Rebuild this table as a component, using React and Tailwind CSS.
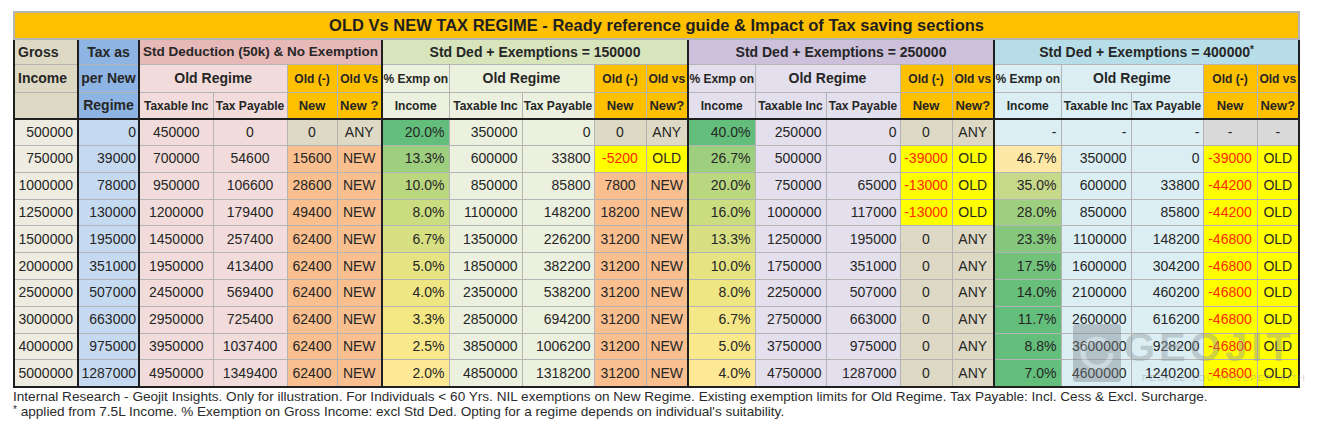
import React from "react";

const widths = [64, 61, 74, 74, 50, 45, 67, 73, 72, 52, 42, 67, 71, 74, 52, 42, 67, 70, 72, 54, 42];

const DARK_L = "border-l-2 border-l-[#1f1f1f]";
const DARK_B = "border-b-2 border-b-[#1f1f1f]";

// gross, taxNew, s1 [taxable, taxpay, diff, verdict], s2..s4 [pct, taxable, taxpay, diff, verdict]
const rows = [
  ["500000", "0", ["450000", "0", "0", "ANY"], ["20.0%", "350000", "0", "0", "ANY"], ["40.0%", "250000", "0", "0", "ANY"], ["-", "-", "-", "-", "-"]],
  ["750000", "39000", ["700000", "54600", "15600", "NEW"], ["13.3%", "600000", "33800", "-5200", "OLD"], ["26.7%", "500000", "0", "-39000", "OLD"], ["46.7%", "350000", "0", "-39000", "OLD"]],
  ["1000000", "78000", ["950000", "106600", "28600", "NEW"], ["10.0%", "850000", "85800", "7800", "NEW"], ["20.0%", "750000", "65000", "-13000", "OLD"], ["35.0%", "600000", "33800", "-44200", "OLD"]],
  ["1250000", "130000", ["1200000", "179400", "49400", "NEW"], ["8.0%", "1100000", "148200", "18200", "NEW"], ["16.0%", "1000000", "117000", "-13000", "OLD"], ["28.0%", "850000", "85800", "-44200", "OLD"]],
  ["1500000", "195000", ["1450000", "257400", "62400", "NEW"], ["6.7%", "1350000", "226200", "31200", "NEW"], ["13.3%", "1250000", "195000", "0", "ANY"], ["23.3%", "1100000", "148200", "-46800", "OLD"]],
  ["2000000", "351000", ["1950000", "413400", "62400", "NEW"], ["5.0%", "1850000", "382200", "31200", "NEW"], ["10.0%", "1750000", "351000", "0", "ANY"], ["17.5%", "1600000", "304200", "-46800", "OLD"]],
  ["2500000", "507000", ["2450000", "569400", "62400", "NEW"], ["4.0%", "2350000", "538200", "31200", "NEW"], ["8.0%", "2250000", "507000", "0", "ANY"], ["14.0%", "2100000", "460200", "-46800", "OLD"]],
  ["3000000", "663000", ["2950000", "725400", "62400", "NEW"], ["3.3%", "2850000", "694200", "31200", "NEW"], ["6.7%", "2750000", "663000", "0", "ANY"], ["11.7%", "2600000", "616200", "-46800", "OLD"]],
  ["4000000", "975000", ["3950000", "1037400", "62400", "NEW"], ["2.5%", "3850000", "1006200", "31200", "NEW"], ["5.0%", "3750000", "975000", "0", "ANY"], ["8.8%", "3600000", "928200", "-46800", "OLD"]],
  ["5000000", "1287000", ["4950000", "1349400", "62400", "NEW"], ["2.0%", "4850000", "1318200", "31200", "NEW"], ["4.0%", "4750000", "1287000", "0", "ANY"], ["7.0%", "4600000", "1240200", "-46800", "OLD"]],
];

// colour scale for the "% Exmp" columns
const scale = {
  s2: ["bg-[#63be7b]", "bg-[#9dcf7e]", "bg-[#bad780]", "bg-[#cbdc81]", "bg-[#d6df82]", "bg-[#e5e382]", "bg-[#eee683]", "bg-[#f4e883]", "bg-[#fae98c]", "bg-[#fde995]"],
  s3: ["bg-[#63be7b]", "bg-[#9dcf7e]", "bg-[#bad780]", "bg-[#cbdc81]", "bg-[#d7df82]", "bg-[#e5e382]", "bg-[#eee683]", "bg-[#f3e787]", "bg-[#fae98c]", "bg-[#fde995]"],
  s4: ["bg-[#daeef3]", "bg-[#fde8a6]", "bg-[#c6d98a]", "bg-[#9ecf80]", "bg-[#84c77d]", "bg-[#72c27c]", "bg-[#68bf7b]", "bg-[#63be7b]", "bg-[#63be7b]", "bg-[#63be7b]"],
};

const verdictBg = {
  ANY: "bg-[#ddd9c4]",
  NEW: "bg-[#fabf8f]",
  OLD: "bg-[#ffff00]",
  "-": "bg-[#d9d9d9]",
};

const Cell = ({ className = "", children, ...rest }) => (
  <td
    {...rest}
    className={`border border-[#b4b4b4] p-0 whitespace-nowrap overflow-hidden ${className}`}
  >
    {children}
  </td>
);

const DiffCells = ({ diff, verdict }) => (
  <>
    <Cell className={`text-center ${verdictBg[verdict]} ${diff.startsWith("-") && diff !== "-" ? "text-[#ff2a00]" : ""}`}>
      {diff}
    </Cell>
    <Cell className={`text-center ${verdictBg[verdict]}`}>{verdict}</Cell>
  </>
);

const Section = ({ vals, i, pctScale, bg }) => (
  <>
    <Cell className={`text-right pr-[4px] ${DARK_L} ${pctScale[i]}`}>{vals[0]}</Cell>
    <Cell className={`text-right pr-[4px] ${bg}`}>{vals[1]}</Cell>
    <Cell className={`text-right pr-[3px] ${bg}`}>{vals[2]}</Cell>
    <DiffCells diff={vals[3]} verdict={vals[4]} />
  </>
);

const hSmall = "text-[12px] font-bold text-center";
const hOrange = "bg-[#ffc000] text-[12px] font-bold text-center";

export default function App() {
  return (
    <div className="relative w-[1320px] h-[424px] bg-white text-[#262626] font-['Liberation_Sans',Arial,sans-serif]">
      <div className="pt-[11px] pl-[13px]">
        <table className="table-fixed border-collapse border-2 border-[#1f1f1f] w-[1287px]">
          <colgroup>
            {widths.map((w, i) => (
              <col key={i} style={{ width: w }} />
            ))}
          </colgroup>
          <thead>
            <tr className="h-[26px]">
              <Cell colSpan={21} className="bg-[#ffc000] border-2 border-[#1f1f1f] text-center text-[16.5px] font-bold text-[#1f1f1f]">
                OLD Vs NEW TAX REGIME - Ready reference guide &amp; Impact of Tax saving sections
              </Cell>
            </tr>
            <tr className="h-[26px] text-[14px] font-bold">
              <Cell className="bg-[#ddd9c4] text-left pl-[3px]">Gross</Cell>
              <Cell className={`bg-[#8db4e2] text-center ${DARK_L}`}>Tax as</Cell>
              <Cell colSpan={4} className={`bg-[#e6b8b7] text-center text-[13.5px] ${DARK_L}`}>
                Std Deduction (50k) &amp; No Exemption
              </Cell>
              <Cell colSpan={5} className={`bg-[#d8e4bc] text-center ${DARK_L}`}>
                Std Ded + Exemptions = 150000
              </Cell>
              <Cell colSpan={5} className={`bg-[#ccc0da] text-center ${DARK_L}`}>
                Std Ded + Exemptions = 250000
              </Cell>
              <Cell colSpan={5} className={`bg-[#b7dee8] text-center ${DARK_L}`}>
                Std Ded + Exemptions = 400000<span className="relative -top-[4px] text-[10px]">*</span>
              </Cell>
            </tr>
            <tr className="h-[28px]">
              <Cell className="bg-[#ddd9c4] text-left pl-[3px] text-[14px] font-bold">Income</Cell>
              <Cell className={`bg-[#8db4e2] text-center text-[14px] font-bold ${DARK_L}`}>per New</Cell>
              <Cell colSpan={2} className={`bg-[#f2dcdb] text-center text-[14px] font-bold ${DARK_L}`}>Old Regime</Cell>
              <Cell className={hOrange}>Old (-)</Cell>
              <Cell className={hOrange}>Old Vs</Cell>
              <Cell className={`bg-[#ebf1de] ${hSmall} ${DARK_L}`}>% Exmp on</Cell>
              <Cell colSpan={2} className="bg-[#ebf1de] text-center text-[14px] font-bold">Old Regime</Cell>
              <Cell className={hOrange}>Old (-)</Cell>
              <Cell className={hOrange}>Old vs</Cell>
              <Cell className={`bg-[#e4dfec] ${hSmall} ${DARK_L}`}>% Exmp on</Cell>
              <Cell colSpan={2} className="bg-[#e4dfec] text-center text-[14px] font-bold">Old Regime</Cell>
              <Cell className={hOrange}>Old (-)</Cell>
              <Cell className={hOrange}>Old vs</Cell>
              <Cell className={`bg-[#daeef3] ${hSmall} ${DARK_L}`}>% Exmp on</Cell>
              <Cell colSpan={2} className="bg-[#daeef3] text-center text-[14px] font-bold">Old Regime</Cell>
              <Cell className={hOrange}>Old (-)</Cell>
              <Cell className={hOrange}>Old vs</Cell>
            </tr>
            <tr className="h-[26px]">
              <Cell className={`bg-[#ddd9c4] ${DARK_B}`}></Cell>
              <Cell className={`bg-[#8db4e2] text-center text-[14px] font-bold ${DARK_L} ${DARK_B}`}>Regime</Cell>
              <Cell className={`bg-[#f2dcdb] ${hSmall} ${DARK_L} ${DARK_B}`}>Taxable Inc</Cell>
              <Cell className={`bg-[#f2dcdb] ${hSmall} ${DARK_B}`}>Tax Payable</Cell>
              <Cell className={`${hOrange} text-[13px] ${DARK_B}`}>New</Cell>
              <Cell className={`${hOrange} text-[13px] ${DARK_B}`}>New ?</Cell>
              <Cell className={`bg-[#ebf1de] ${hSmall} text-[12.5px] ${DARK_L} ${DARK_B}`}>Income</Cell>
              <Cell className={`bg-[#ebf1de] ${hSmall} ${DARK_B}`}>Taxable Inc</Cell>
              <Cell className={`bg-[#ebf1de] ${hSmall} ${DARK_B}`}>Tax Payable</Cell>
              <Cell className={`${hOrange} text-[13px] ${DARK_B}`}>New</Cell>
              <Cell className={`${hOrange} text-[13px] ${DARK_B}`}>New?</Cell>
              <Cell className={`bg-[#e4dfec] ${hSmall} text-[12.5px] ${DARK_L} ${DARK_B}`}>Income</Cell>
              <Cell className={`bg-[#e4dfec] ${hSmall} ${DARK_B}`}>Taxable Inc</Cell>
              <Cell className={`bg-[#e4dfec] ${hSmall} ${DARK_B}`}>Tax Payable</Cell>
              <Cell className={`${hOrange} text-[13px] ${DARK_B}`}>New</Cell>
              <Cell className={`${hOrange} text-[13px] ${DARK_B}`}>New?</Cell>
              <Cell className={`bg-[#daeef3] ${hSmall} text-[12.5px] ${DARK_L} ${DARK_B}`}>Income</Cell>
              <Cell className={`bg-[#daeef3] ${hSmall} ${DARK_B}`}>Taxable Inc</Cell>
              <Cell className={`bg-[#daeef3] ${hSmall} ${DARK_B}`}>Tax Payable</Cell>
              <Cell className={`${hOrange} text-[13px] ${DARK_B}`}>New</Cell>
              <Cell className={`${hOrange} text-[13px] ${DARK_B}`}>New?</Cell>
            </tr>
          </thead>
          <tbody className="text-[14px]">
            {rows.map((r, i) => (
              <tr key={r[0]} className="h-[26.8px]">
                <Cell className="bg-[#eeece1] text-right pr-[4px]">{r[0]}</Cell>
                <Cell className={`bg-[#c5d9f1] text-right pr-[2px] ${DARK_L}`}>{r[1]}</Cell>
                <Cell className={`bg-[#f2dcdb] text-center ${DARK_L}`}>{r[2][0]}</Cell>
                <Cell className="bg-[#f2dcdb] text-center">{r[2][1]}</Cell>
                <DiffCells diff={r[2][2]} verdict={r[2][3]} />
                <Section vals={r[3]} i={i} pctScale={scale.s2} bg="bg-[#ebf1de]" />
                <Section vals={r[4]} i={i} pctScale={scale.s3} bg="bg-[#e4dfec]" />
                <Section vals={r[5]} i={i} pctScale={scale.s4} bg="bg-[#daeef3]" />
              </tr>
            ))}
          </tbody>
        </table>
        <div className="mt-[1px] text-[13.6px] leading-[15px] text-[#2b2b2b]">
          <p>
            Internal Research - Geojit Insights. Only for illustration. For Individuals &lt; 60 Yrs. NIL exemptions on New Regime. Existing exemption limits for Old Regime. Tax Payable: Incl. Cess &amp; Excl. Surcharge.
          </p>
          <p>
            <span className="relative -top-[3px] text-[10px]">*</span> applied from 7.5L Income. % Exemption on Gross Income: excl Std Ded. Opting for a regime depends on individual's suitability.
          </p>
        </div>
      </div>

      {/* Geojit watermark */}
      <div className="absolute left-[1073px] top-[324px] opacity-40 pointer-events-none">
        <svg width="48" height="58" viewBox="0 0 48 58">
          <rect x="0" y="0" width="48" height="58" rx="3" fill="#7b838b" />
          <path d="M38 29a14 14 0 1 1-6-11.5" fill="none" stroke="#b9bec3" strokeWidth="5" />
        </svg>
      </div>
      <div className="absolute left-[1124px] top-[323px] text-[40px] leading-[48px] font-bold tracking-[4px] text-[#8e959c] opacity-40 pointer-events-none">
        GEOJIT
      </div>
      <div className="absolute left-[1142px] top-[373px] text-[9px] leading-[10px] tracking-[1.5px] text-[#8e959c] opacity-40 pointer-events-none">
        PEOPLE YOU PROSPER WITH
      </div>
    </div>
  );
}
